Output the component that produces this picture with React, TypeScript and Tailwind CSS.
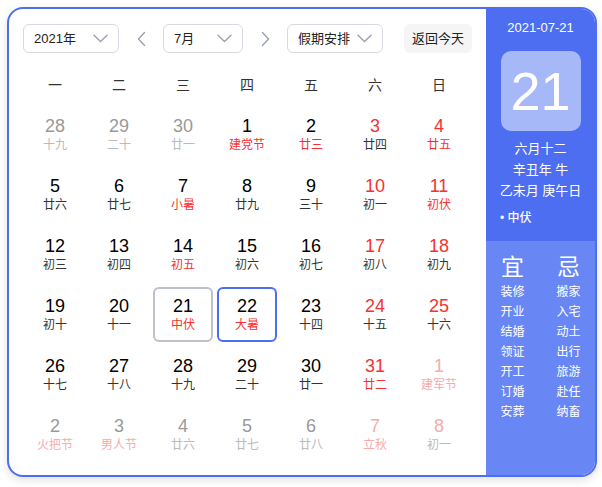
import React from "react";

type Cell = { d: number; l: string; nc: string; lc: string; box?: "sel" | "today" };

const K = "#000";
const R = "#f73131";
const L = "#333";
const G = "#999";
const LG = "#bbb";
const LR = "#f9aaaa";

const c = (d: number, l: string, nc: string, lc: string, box?: "sel" | "today"): Cell => ({ d, l, nc, lc, box });

const rows: Cell[][] = [
  [c(28, "十九", G, LG), c(29, "二十", G, LG), c(30, "廿一", G, LG), c(1, "建党节", K, R), c(2, "廿三", K, R), c(3, "廿四", R, L), c(4, "廿五", R, R)],
  [c(5, "廿六", K, L), c(6, "廿七", K, L), c(7, "小暑", K, R), c(8, "廿九", K, L), c(9, "三十", K, L), c(10, "初一", R, L), c(11, "初伏", R, R)],
  [c(12, "初三", K, L), c(13, "初四", K, L), c(14, "初五", K, R), c(15, "初六", K, L), c(16, "初七", K, L), c(17, "初八", R, L), c(18, "初九", R, L)],
  [c(19, "初十", K, L), c(20, "十一", K, L), c(21, "中伏", K, R, "sel"), c(22, "大暑", K, R, "today"), c(23, "十四", K, L), c(24, "十五", R, L), c(25, "十六", R, L)],
  [c(26, "十七", K, L), c(27, "十八", K, L), c(28, "十九", K, L), c(29, "二十", K, L), c(30, "廿一", K, L), c(31, "廿二", R, R), c(1, "建军节", LR, LR)],
  [c(2, "火把节", G, LR), c(3, "男人节", G, LR), c(4, "廿六", G, LG), c(5, "廿七", G, LG), c(6, "廿八", G, LG), c(7, "立秋", LR, LR), c(8, "初一", LR, LG)],
];

const weekdays = ["一", "二", "三", "四", "五", "六", "日"];
const yi = ["装修", "开业", "结婚", "领证", "开工", "订婚", "安葬"];
const ji = ["搬家", "入宅", "动土", "出行", "旅游", "赴任", "纳畜"];

const Down = () => (
  <svg width="15" height="9" viewBox="0 0 15 9" fill="none">
    <path d="M1 1.2L7.5 7.5L14 1.2" stroke="#9aa0ad" strokeWidth="1.4" strokeLinecap="round" strokeLinejoin="round" />
  </svg>
);

const Arrow = ({ dir }: { dir: "l" | "r" }) => (
  <svg width="9" height="16" viewBox="0 0 9 16" fill="none">
    <path
      d={dir === "l" ? "M7.5 1.5L1.5 8L7.5 14.5" : "M1.5 1.5L7.5 8L1.5 14.5"}
      stroke="#9aa0ad"
      strokeWidth="1.4"
      strokeLinecap="round"
      strokeLinejoin="round"
    />
  </svg>
);

export default function App() {
  return (
    <div
      className="w-[602px] h-[487px] bg-white pt-[7px] pl-[7px]"
      style={{ fontFamily: '"Liberation Sans", "Noto Sans CJK SC", sans-serif' }}
    >
      <div className="w-[590px] h-[470px] border-2 border-[#4e6ef2] rounded-[16px] overflow-hidden flex shadow-[0_3px_10px_rgba(0,0,0,0.12)] bg-white">
        {/* left */}
        <div className="w-[477px] pl-[14px] pt-[15px] flex flex-col">
          <div className="flex items-center h-[29px]">
            <div className="w-[96px] h-[29px] border border-[#d7d9e0] rounded-[6px] flex items-center justify-between pl-[10px] pr-[10px] text-[13px] text-[#222]">
              <span>2021年</span>
              <Down />
            </div>
            <div className="w-[44px] flex justify-center">
              <Arrow dir="l" />
            </div>
            <div className="w-[80px] h-[29px] border border-[#d7d9e0] rounded-[6px] flex items-center justify-between pl-[10px] pr-[10px] text-[13px] text-[#222]">
              <span>7月</span>
              <Down />
            </div>
            <div className="w-[44px] flex justify-center">
              <Arrow dir="r" />
            </div>
            <div className="w-[96px] h-[29px] border border-[#d7d9e0] rounded-[6px] flex items-center justify-between pl-[10px] pr-[10px] text-[13px] text-[#222]">
              <span>假期安排</span>
              <Down />
            </div>
            <div className="ml-[21px] w-[68px] h-[29px] rounded-[6px] bg-[#f5f5f6] flex items-center justify-center text-[13px] text-[#222]">
              返回今天
            </div>
          </div>
          <div className="grid grid-cols-[repeat(7,64px)] mt-[12px] h-[40px] items-center">
            {weekdays.map((w) => (
              <div key={w} className="text-center text-[14px] text-[#333]">
                {w}
              </div>
            ))}
          </div>
          <div className="grid grid-cols-[repeat(7,64px)] auto-rows-[60px]">
            {rows.flat().map((cell, i) => (
              <div key={i} className="px-[2px] pt-[2px]">
                <div
                  className={
                    "h-[55px] flex flex-col items-center pt-[6px] rounded-[6px] " +
                    (cell.box === "sel"
                      ? "border-2 border-[#bdc1cc]"
                      : cell.box === "today"
                      ? "border-2 border-[#4e6ef2]"
                      : "border-2 border-transparent")
                  }
                >
                  <div className="text-[18px] leading-[22px]" style={{ color: cell.nc }}>
                    {cell.d}
                  </div>
                  <div className="text-[12px] leading-[16px]" style={{ color: cell.lc }}>
                    {cell.l}
                  </div>
                </div>
              </div>
            ))}
          </div>
        </div>
        {/* right */}
        <div className="flex-1 flex flex-col text-white">
          <div className="bg-[#4e6ef2] h-[232px] flex flex-col items-center pt-[11px]">
            <div className="text-[13px] leading-[16px]">2021-07-21</div>
            <div className="mt-[15px] w-[80px] h-[80px] rounded-[10px] bg-[#a7b8f9] flex items-center justify-center text-[54px] leading-none">
              21
            </div>
            <div className="mt-[7px] text-[13px] leading-[21px] text-center">
              <div>六月十二</div>
              <div>辛丑年 牛</div>
              <div>乙未月 庚午日</div>
            </div>
            <div className="self-start ml-[14px] mt-[9px] text-[12px] leading-[16px] font-medium">• 中伏</div>
          </div>
          <div className="flex-1 bg-[#6887f4] flex justify-center gap-[32px] pt-[12px]">
            <div className="flex flex-col items-center">
              <div className="text-[23px] leading-[28px] mb-[1px]">宜</div>
              {yi.map((t) => (
                <div key={t} className="text-[12px] leading-[20px]">
                  {t}
                </div>
              ))}
            </div>
            <div className="flex flex-col items-center">
              <div className="text-[23px] leading-[28px] mb-[1px]">忌</div>
              {ji.map((t) => (
                <div key={t} className="text-[12px] leading-[20px]">
                  {t}
                </div>
              ))}
            </div>
          </div>
        </div>
      </div>
    </div>
  );
}
